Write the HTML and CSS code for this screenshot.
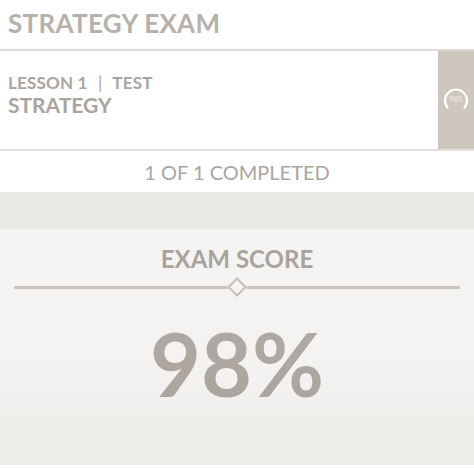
FILE: index.html
```html
<!DOCTYPE html>
<html>
<head>
<meta charset="utf-8">
<link rel="stylesheet" href="styles.css">
</head>
<body>
<div class="page">
  <header class="title">STRATEGY EXAM</header>
  <div class="lesson">
    <div class="lesson-text">
      <div class="lesson-meta">LESSON 1 <span class="sep">|</span> TEST</div>
      <div class="lesson-name">STRATEGY</div>
    </div>
    <div class="lesson-side">
      <div class="ring">
        <svg width="28" height="28" viewBox="0 0 28 28">
          <path d="M5.5 21.5 A11 11 0 1 1 22.5 21.5" fill="none" stroke="#ffffff" stroke-width="2.2" stroke-linecap="round"/>
        </svg>
        <span class="ring-label">98%</span>
      </div>
    </div>
  </div>
  <div class="completed">1 OF 1 COMPLETED</div>
  <div class="band"></div>
  <section class="score">
    <div class="score-title">EXAM SCORE</div>
    <div class="divider">
      <span class="rule"></span>
      <span class="diamond"></span>
      <span class="rule"></span>
    </div>
    <div class="score-value">98%</div>
  </section>
</div>
</body>
</html>
```
FILE: styles.css
```css
html, body {
  margin: 0;
  padding: 0;
  background: #ffffff;
}
.page {
  width: 474px;
  height: 468px;
  display: flex;
  flex-direction: column;
  font-family: "Lato", "Liberation Sans", sans-serif;
  overflow: hidden;
}
.title {
  height: 51px;
  box-sizing: border-box;
  padding: 7px 0 0 8px;
  font-size: 26px;
  font-weight: 700;
  color: #b6b1aa;
  letter-spacing: 0.3px;
  border-bottom: 2px solid #dedbd7;
}
.lesson {
  height: 98px;
  display: flex;
  border-bottom: 2px solid #e2dfdb;
}
.lesson-text {
  flex: 1;
  padding: 23px 0 0 8px;
}
.lesson-meta {
  font-size: 17px;
  font-weight: 700;
  color: #a9a49d;
  line-height: 18px;
  letter-spacing: 0.2px;
}
.sep {
  font-weight: 400;
  margin: 0 6px;
}
.lesson-name {
  font-size: 21px;
  font-weight: 700;
  color: #a9a49d;
  line-height: 24px;
  margin-top: 1px;
}
.lesson-side {
  width: 36px;
  background: #cdc7be;
  display: flex;
  align-items: center;
  justify-content: center;
}
.ring {
  position: relative;
  width: 28px;
  height: 28px;
}
.ring svg {
  display: block;
}
.ring-label {
  position: absolute;
  left: 0;
  right: 0;
  top: 9px;
  text-align: center;
  font-size: 7px;
  color: #efece8;
}
.completed {
  height: 41px;
  display: flex;
  align-items: center;
  justify-content: center;
  font-size: 20px;
  font-weight: 400;
  color: #aaa59f;
}
.band {
  height: 37px;
  background: #ebe9e6;
}
.score {
  flex: 1;
  background: linear-gradient(#f5f4f3, #f3f2f0 60%, #edebe8);
  margin-bottom: 3px;
  display: flex;
  flex-direction: column;
  align-items: center;
}
.score-title {
  margin-top: 16px;
  font-size: 24px;
  font-weight: 700;
  color: #a8a39c;
  line-height: 28px;
}
.divider {
  width: 446px;
  display: flex;
  align-items: center;
  margin-top: 7px;
}
.rule {
  flex: 1;
  height: 3px;
  background: #c8c2bb;
  border-radius: 2px;
}
.diamond {
  width: 10px;
  height: 10px;
  margin: 0 2px;
  border: 2.5px solid #c4beb7;
  background: #f5f4f3;
  transform: rotate(45deg);
}
.score-value {
  margin-top: 19px;
  font-size: 88px;
  font-weight: 700;
  line-height: 100px;
  color: #aea8a1;
  background: linear-gradient(#b0aaa4, #aaa49d);
  -webkit-background-clip: text;
  background-clip: text;
  -webkit-text-fill-color: transparent;
}
```
